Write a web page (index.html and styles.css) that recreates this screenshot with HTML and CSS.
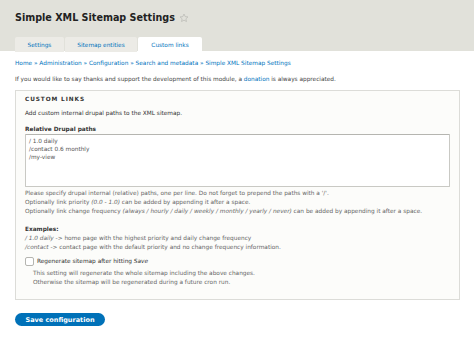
FILE: index.html
```html
<!DOCTYPE html>
<html>
<head>
<meta charset="utf-8">
<link rel="stylesheet" href="styles.css">
</head>
<body>
<header class="head">
  <h1 class="title">Simple XML Sitemap Settings <svg class="star" viewBox="0 0 24 24" width="10" height="10"><path d="M12 2.5l2.9 6.2 6.6.7-5 4.5 1.4 6.6L12 17.1 6.1 20.5l1.4-6.6-5-4.5 6.6-.7z" fill="none" stroke="#b5b5b0" stroke-width="1.6" stroke-linejoin="round"/></svg></h1>
  <nav class="tabs">
    <a class="tab">Settings</a>
    <a class="tab">Sitemap entities</a>
    <a class="tab active">Custom links</a>
  </nav>
</header>
<main class="content">
  <div class="crumbs"><a>Home</a> » <a>Administration</a> » <a>Configuration</a> » <a>Search and metadata</a> » <a>Simple XML Sitemap Settings</a></div>
  <p class="intro">If you would like to say thanks and support the development of this module, a <a>donation</a> is always appreciated.</p>
  <fieldset class="box">
    <div class="legend">CUSTOM LINKS</div>
    <p class="desc">Add custom internal drupal paths to the XML sitemap.</p>
    <div class="label">Relative Drupal paths</div>
    <div class="textarea">/ 1.0 daily<br>/contact 0.6 monthly<br>/my-view</div>
    <div class="help">
      <div>Please specify drupal internal (relative) paths, one per line. Do not forget to prepend the paths with a '/'.</div>
      <div>Optionally link priority <em>(0.0 - 1.0)</em> can be added by appending it after a space.</div>
      <div>Optionally link change frequency <em>(always / hourly / daily / weekly / monthly / yearly / never)</em> can be added by appending it after a space.</div>
      <div class="gap"><strong>Examples:</strong></div>
      <div><em>/ 1.0 daily</em> -&gt; home page with the highest priority and daily change frequency</div>
      <div><em>/contact</em> -&gt; contact page with the default priority and no change frequency information.</div>
    </div>
    <div class="check">
      <span class="box-check"></span>
      <span class="check-label">Regenerate sitemap after hitting <em>Save</em></span>
    </div>
    <div class="check-help">
      <div>This setting will regenerate the whole sitemap including the above changes.</div>
      <div>Otherwise the sitemap will be regenerated during a future cron run.</div>
    </div>
  </fieldset>
  <button class="save">Save configuration</button>
</main>
</body>
</html>
```
FILE: styles.css
```css
html, body { margin: 0; padding: 0; background: #fff; }
body { font-family: "DejaVu Sans", sans-serif; color: #333; font-size: 5.8px; }
a { color: #0074bd; text-decoration: none; }
.head { background: #e1e1da; padding: 11px 15px 0; height: 40px; display: flex; flex-direction: column; }
.title { margin: 0; font-size: 9.6px; line-height: 14px; font-weight: bold; color: #222; display: flex; align-items: center; gap: 4px; }
.star { display: block; }
.tabs { display: flex; gap: 1px; margin-top: 12px; }
.tab { display: flex; align-items: center; justify-content: center; height: 15px; background: #ecebe6; color: #0074bd; font-size: 5.8px; border-radius: 2px 2px 0 0; }
.tab:nth-child(1) { width: 49px; }
.tab:nth-child(2) { width: 72px; }
.tab:nth-child(3) { width: 64px; }
.tab.active { background: #fff; height: 15px; }
.content { padding: 7px 15px 0; }
.crumbs { line-height: 10px; color: #0074bd; }
.intro { margin: 6px 0 0; line-height: 10px; color: #444; }
.box { margin: 6px 0 0; padding: 3px 9px 12px; border: 1px solid #dcdcd8; background: #fcfcfa; min-width: 0; box-sizing: border-box; width: 445px; }
.legend { font-weight: bold; letter-spacing: 0.9px; line-height: 10px; color: #333; }
.desc { margin: 4px 0 0; line-height: 10px; }
.label { margin-top: 6px; font-weight: bold; line-height: 10px; color: #333; }
.textarea { margin-top: 0; height: 47px; border: 1px solid #c9c9c4; border-top-color: #b5b5b0; background: #fff; border-radius: 1px; padding: 2px 3px; line-height: 8px; color: #555; }
.help { margin-top: 2px; line-height: 9px; color: #666; }
.help .gap { margin-top: 9px; color: #333; }
.help strong { color: #333; }
.check { display: flex; align-items: center; gap: 3px; margin-top: 4px; line-height: 10px; }
.box-check { width: 7px; height: 7px; border: 1px solid #b5b5b0; border-radius: 2px; background: #fff; }
.check-label { color: #333; }
.check-help { margin-top: 3px; padding-left: 8px; line-height: 9px; color: #666; }
.save { margin-top: 13px; background: #0071b8; color: #fff; border: 0; border-radius: 8px; font-family: "DejaVu Sans", sans-serif; font-weight: bold; font-size: 6.5px; height: 13px; width: 90px; padding: 0; }
```
